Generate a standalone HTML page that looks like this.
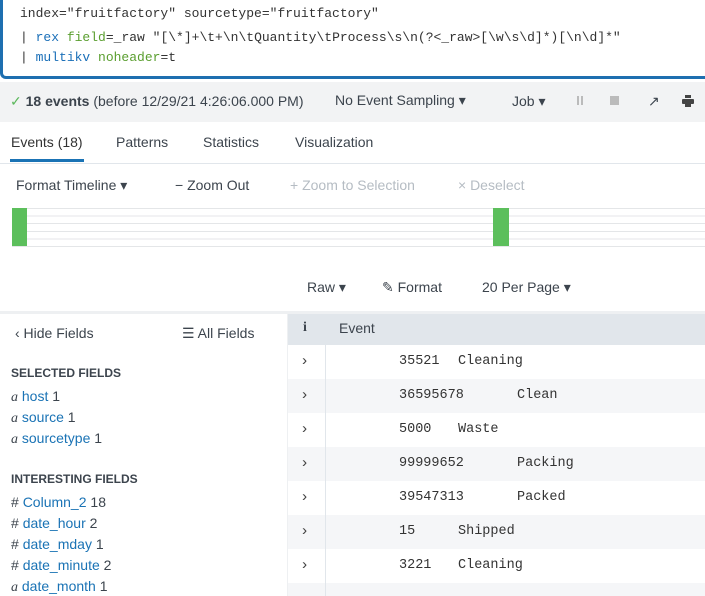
<!DOCTYPE html>
<html><head><style>
body{margin:0;width:705px;height:596px;overflow:hidden;background:#fff;font-family:"Liberation Sans",sans-serif;position:relative;color:#3c444d}
.a{position:absolute;white-space:nowrap}
.mono{font-family:"Liberation Mono",monospace;font-size:13px;color:#333}
.blue{color:#1a6fb8}.grn{color:#5a9e2f}
.lnk{color:#1a73b5}
.t{font-size:14px}
.r{position:absolute;font-family:"Liberation Mono",monospace;font-size:13.5px;color:#333;white-space:nowrap}
</style></head><body>
<div class="a" style="left:0;top:-4px;width:705px;height:80px;border:3px solid #1e6fb0;border-top:none;border-right:none;border-radius:0 0 0 6px;"></div>
<div class="a mono" style="left:20px;top:6px">index="fruitfactory" sourcetype="fruitfactory"</div>
<div class="a mono" style="left:20px;top:30px">| <span class="blue">rex</span> <span class="grn">field</span>=_raw "[\*]+\t+\n\tQuantity\tProcess\s\n(?&lt;_raw&gt;[\w\s\d]*)[\n\d]*"</div>
<div class="a mono" style="left:20px;top:50px">| <span class="blue">multikv</span> <span class="grn">noheader</span>=t</div>
<div class="a" style="left:0;top:82px;width:705px;height:40px;background:#f2f3f4"></div>
<div class="a t" style="left:10px;top:93px"><span style="color:#5cb85c">✓</span> <b>18 events</b> (before 12/29/21 4:26:06.000 PM)</div>
<div class="a t" style="left:335px;top:92px">No Event Sampling ▾</div>
<div class="a t" style="left:512px;top:93px">Job ▾</div>
<div class="a" style="left:577px;top:96px;width:2px;height:9px;background:#bbb;box-shadow:4px 0 #bbb"></div>
<div class="a" style="left:610px;top:96px;width:9px;height:9px;background:#bbb"></div>
<div class="a t" style="left:648px;top:93px">↗</div>
<div class="a" style="left:685px;top:95px;width:6px;height:3px;background:#444"></div>
<div class="a" style="left:682px;top:99px;width:12px;height:5px;background:#444;border-radius:1px"></div>
<div class="a" style="left:685px;top:104px;width:6px;height:3px;background:#444"></div>
<div class="a t" style="left:11px;top:134px;color:#333">Events (18)</div>
<div class="a" style="left:10px;top:159px;width:74px;height:3px;background:#1a73b5"></div>
<div class="a" style="left:0;top:163px;width:705px;height:1px;background:#e1e6eb"></div>
<div class="a t" style="left:116px;top:134px">Patterns</div>
<div class="a t" style="left:203px;top:134px">Statistics</div>
<div class="a t" style="left:295px;top:134px">Visualization</div>
<div class="a t" style="left:16px;top:177px">Format Timeline ▾</div>
<div class="a t" style="left:175px;top:177px">− Zoom Out</div>
<div class="a t" style="left:290px;top:177px;color:#b5bcc3">+ Zoom to Selection</div>
<div class="a t" style="left:458px;top:177px;color:#b5bcc3">× Deselect</div>
<div class="a" style="left:12px;top:208px;width:693px;height:38px;background:repeating-linear-gradient(#e4e6e8 0 1px,#fff 1px 7.6px);border-bottom:1px solid #e4e6e8"></div>
<div class="a" style="left:12px;top:208px;width:15px;height:38px;background:#5cbf5c"></div>
<div class="a" style="left:493px;top:208px;width:16px;height:38px;background:#5cbf5c"></div>
<div class="a t" style="left:307px;top:279px">Raw ▾</div>
<div class="a t" style="left:382px;top:279px">✎ Format</div>
<div class="a t" style="left:482px;top:279px">20 Per Page ▾</div>
<div class="a" style="left:0;top:311px;width:705px;height:3px;background:#eef0f2"></div>
<div class="a" style="left:287px;top:314px;width:1px;height:282px;background:#eef0f2"></div>
<div class="a t" style="left:15px;top:325px">‹ Hide Fields</div>
<div class="a t" style="left:182px;top:325px">☰ All Fields</div>
<div class="a" style="left:11px;top:366px;font-size:12px;font-weight:bold">SELECTED FIELDS</div>
<div class="a t" style="left:11px;top:388px"><i style="font-family:'Liberation Serif'">a</i> <span class="lnk">host</span> 1</div>
<div class="a t" style="left:11px;top:409px"><i style="font-family:'Liberation Serif'">a</i> <span class="lnk">source</span> 1</div>
<div class="a t" style="left:11px;top:430px"><i style="font-family:'Liberation Serif'">a</i> <span class="lnk">sourcetype</span> 1</div>
<div class="a" style="left:11px;top:472px;font-size:12px;font-weight:bold">INTERESTING FIELDS</div>
<div class="a t" style="left:11px;top:494px"># <span class="lnk">Column_2</span> 18</div>
<div class="a t" style="left:11px;top:515px"># <span class="lnk">date_hour</span> 2</div>
<div class="a t" style="left:11px;top:536px"># <span class="lnk">date_mday</span> 1</div>
<div class="a t" style="left:11px;top:557px"># <span class="lnk">date_minute</span> 2</div>
<div class="a t" style="left:11px;top:578px"><i style="font-family:'Liberation Serif'">a</i> <span class="lnk">date_month</span> 1</div>
<div class="a" style="left:288px;top:314px;width:417px;height:31px;background:#e1e6eb"></div>
<div class="a t" style="left:303px;top:320px;font-weight:bold;font-family:'Liberation Serif'">i</div>
<div class="a t" style="left:339px;top:320px">Event</div>
<div class="a" style="left:288px;top:345px;width:417px;height:251px;background:repeating-linear-gradient(#fff 0 34px,#f5f6f8 34px 68px)"></div>
<div class="a" style="left:325px;top:314px;width:1px;height:282px;background:#e1e6eb"></div>
<div class="a mono" style="left:300px;top:345px;line-height:34px;color:#444;font-size:15px">
›<br>›<br>›<br>›<br>›<br>›<br>›</div>
<div class="r" style="left:399px;top:354px">35521</div><div class="r" style="left:458px;top:354px">Cleaning</div>
<div class="r" style="left:399px;top:388px">36595678</div><div class="r" style="left:517px;top:388px">Clean</div>
<div class="r" style="left:399px;top:422px">5000</div><div class="r" style="left:458px;top:422px">Waste</div>
<div class="r" style="left:399px;top:456px">99999652</div><div class="r" style="left:517px;top:456px">Packing</div>
<div class="r" style="left:399px;top:490px">39547313</div><div class="r" style="left:517px;top:490px">Packed</div>
<div class="r" style="left:399px;top:524px">15</div><div class="r" style="left:458px;top:524px">Shipped</div>
<div class="r" style="left:399px;top:558px">3221</div><div class="r" style="left:458px;top:558px">Cleaning</div>
</body></html>
